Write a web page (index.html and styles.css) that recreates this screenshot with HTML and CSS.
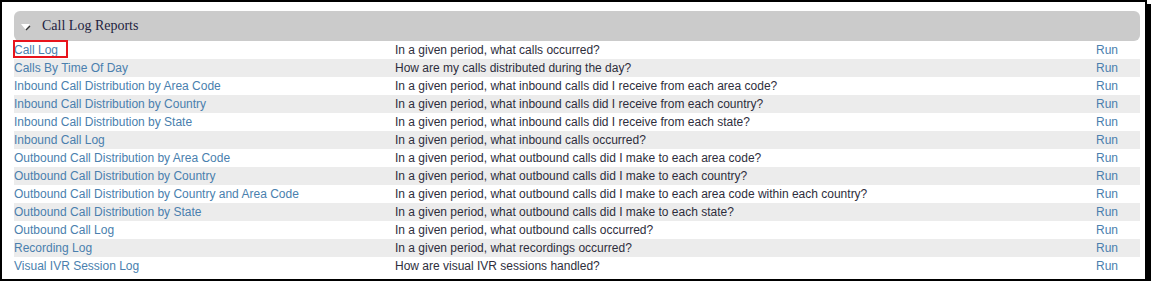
FILE: index.html
```html
<!DOCTYPE html>
<html lang="en">
<head>
    <meta charset="UTF-8">
    <title>Call Log Reports</title>
    <link rel="stylesheet" href="styles.css">
</head>
<body>
    <div class="frame">
        <div class="section-header">
            <svg class="toggle" width="10" height="7" viewBox="0 0 10 7">
                <polygon points="0,0 9,0 4.5,5.5" fill="#fff"/>
                <line x1="5" y1="6" x2="9" y2="2" stroke="#333" stroke-width="1.2"/>
            </svg>
            <span class="section-title">Call Log Reports</span>
        </div>
        <div class="report-list">
            <div class="report-row">
                <a class="report-name highlighted" href="#">Call Log</a>
                <span class="report-desc">In a given period, what calls occurred?</span>
                <a class="report-run" href="#">Run</a>
            </div>
            <div class="report-row">
                <a class="report-name" href="#">Calls By Time Of Day</a>
                <span class="report-desc">How are my calls distributed during the day?</span>
                <a class="report-run" href="#">Run</a>
            </div>
            <div class="report-row">
                <a class="report-name" href="#">Inbound Call Distribution by Area Code</a>
                <span class="report-desc">In a given period, what inbound calls did I receive from each area code?</span>
                <a class="report-run" href="#">Run</a>
            </div>
            <div class="report-row">
                <a class="report-name" href="#">Inbound Call Distribution by Country</a>
                <span class="report-desc">In a given period, what inbound calls did I receive from each country?</span>
                <a class="report-run" href="#">Run</a>
            </div>
            <div class="report-row">
                <a class="report-name" href="#">Inbound Call Distribution by State</a>
                <span class="report-desc">In a given period, what inbound calls did I receive from each state?</span>
                <a class="report-run" href="#">Run</a>
            </div>
            <div class="report-row">
                <a class="report-name" href="#">Inbound Call Log</a>
                <span class="report-desc">In a given period, what inbound calls occurred?</span>
                <a class="report-run" href="#">Run</a>
            </div>
            <div class="report-row">
                <a class="report-name" href="#">Outbound Call Distribution by Area Code</a>
                <span class="report-desc">In a given period, what outbound calls did I make to each area code?</span>
                <a class="report-run" href="#">Run</a>
            </div>
            <div class="report-row">
                <a class="report-name" href="#">Outbound Call Distribution by Country</a>
                <span class="report-desc">In a given period, what outbound calls did I make to each country?</span>
                <a class="report-run" href="#">Run</a>
            </div>
            <div class="report-row">
                <a class="report-name" href="#">Outbound Call Distribution by Country and Area Code</a>
                <span class="report-desc">In a given period, what outbound calls did I make to each area code within each country?</span>
                <a class="report-run" href="#">Run</a>
            </div>
            <div class="report-row">
                <a class="report-name" href="#">Outbound Call Distribution by State</a>
                <span class="report-desc">In a given period, what outbound calls did I make to each state?</span>
                <a class="report-run" href="#">Run</a>
            </div>
            <div class="report-row">
                <a class="report-name" href="#">Outbound Call Log</a>
                <span class="report-desc">In a given period, what outbound calls occurred?</span>
                <a class="report-run" href="#">Run</a>
            </div>
            <div class="report-row">
                <a class="report-name" href="#">Recording Log</a>
                <span class="report-desc">In a given period, what recordings occurred?</span>
                <a class="report-run" href="#">Run</a>
            </div>
            <div class="report-row">
                <a class="report-name" href="#">Visual IVR Session Log</a>
                <span class="report-desc">How are visual IVR sessions handled?</span>
                <a class="report-run" href="#">Run</a>
            </div>
        </div>
    </div>
</body>
</html>
```

FILE: styles.css
```css
body {
    margin: 0;
    padding: 0;
    background-color: #fff;
    font-family: 'Liberation Sans', Arial, sans-serif;
    font-size: 12px;
}
.frame {
    width: 1147px;
    height: 281px;
    box-sizing: border-box;
    border: 2px solid #000;
    box-shadow: 4px 4px 0 #000;
    padding: 9px 5px 0 12px;
    background-color: #fff;
}
.section-header {
    display: flex;
    align-items: center;
    height: 30px;
    background-color: #cbcbcb;
    border-radius: 6px;
}
.toggle {
    margin-left: 7px;
    margin-top: 2px;
}
.section-title {
    margin-left: 11px;
    font-family: 'Liberation Serif', 'Times New Roman', serif;
    font-size: 14px;
    color: #23233f;
}
.report-row {
    display: grid;
    grid-template-columns: 381px 701px 1fr;
    height: 18px;
    line-height: 18px;
}
.report-row:nth-child(even) {
    background-color: #ececec;
}
.report-name, .report-run {
    color: #4a7fae;
    text-decoration: none;
    justify-self: start;
}
.report-desc {
    color: #2e2e3c;
}
.highlighted {
    position: relative;
}
.highlighted::after {
    content: "";
    position: absolute;
    left: -1px;
    top: -1px;
    width: 55px;
    height: 18px;
    box-sizing: border-box;
    border: 2px solid #e8141c;
}
```
